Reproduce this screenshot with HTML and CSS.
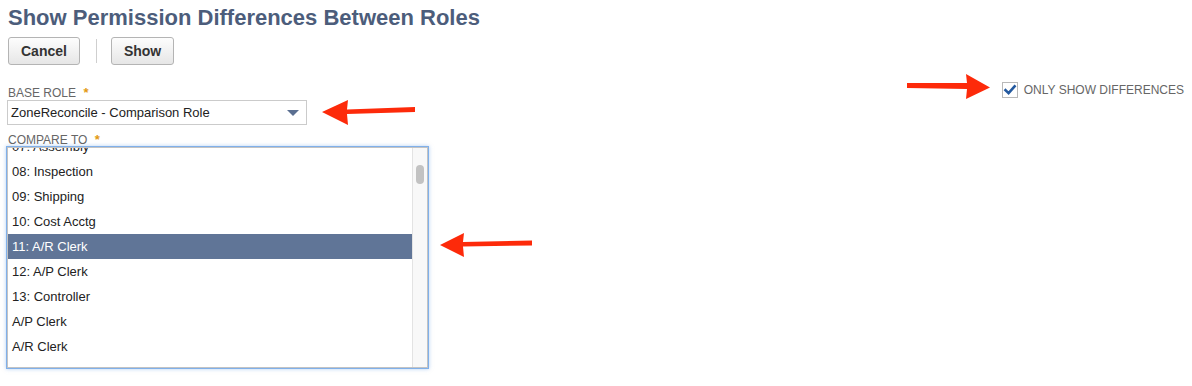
FILE: index.html
```html
<!DOCTYPE html>
<html lang="en">
<head>
  <meta charset="UTF-8">
  <title>Show Permission Differences Between Roles</title>
  <link rel="stylesheet" href="styles.css">
</head>
<body>
  <div class="page">
    <h1 class="title">Show Permission Differences Between Roles</h1>

    <div class="toolbar">
      <button class="btn">Cancel</button>
      <span class="divider"></span>
      <button class="btn">Show</button>
    </div>

    <div class="form">
      <div class="fields">
        <div class="field">
          <div class="field-label">Base Role <span class="req">*</span></div>
          <div class="select">
            <span class="select-value">ZoneReconcile - Comparison Role</span>
            <span class="caret"></span>
          </div>
        </div>

        <div class="field compare">
          <div class="field-label">Compare To <span class="req">*</span></div>
          <div class="listbox">
            <ul class="options">
              <li>07: Assembly</li>
              <li>08: Inspection</li>
              <li>09: Shipping</li>
              <li>10: Cost Acctg</li>
              <li class="selected">11: A/R Clerk</li>
              <li>12: A/P Clerk</li>
              <li>13: Controller</li>
              <li>A/P Clerk</li>
              <li>A/R Clerk</li>
            </ul>
            <div class="scrollbar"><div class="thumb"></div></div>
          </div>
        </div>
      </div>

      <label class="check-row">
        <span class="checkbox">
          <svg width="14" height="14" viewBox="0 0 14 14">
            <polyline points="2.5,7.2 5.6,10.2 11.6,3.4" fill="none" stroke="#23599f" stroke-width="2.6" stroke-linecap="square"/>
          </svg>
        </span>
        Only show differences
      </label>
    </div>

    <!-- red annotation arrows drawn over the screenshot -->
    <svg class="annotations" width="1192" height="386" viewBox="0 0 1192 386">
      <g fill="#fd2a0a">
        <polygon points="322,112 348,100 347,109.5 415,107 415,112 347,114 348,125"/>
        <polygon points="440,245 464,233 463,242 532,240.5 532,245.5 463,246.5 464,257"/>
        <polygon points="990,87.5 966,74 967,83 907,83 907,88 967,89 966,99"/>
      </g>
    </svg>
  </div>
</body>
</html>
```

FILE: styles.css
```css
body {
  margin: 0;
  font-family: "Liberation Sans", Arial, sans-serif;
  color: #222;
  background: #fff;
}

.page {
  position: relative;
  padding: 5px 8px 0 8px;
  height: 381px;
  overflow: hidden;
}

.title {
  margin: 0;
  font-size: 22px;
  line-height: 26px;
  font-weight: bold;
  color: #4c5d7b;
}

.toolbar {
  display: flex;
  align-items: center;
  margin-top: 6px;
  height: 28px;
}

.btn {
  height: 28px;
  padding: 0 12px;
  font-family: "Liberation Sans", Arial, sans-serif;
  font-size: 14px;
  font-weight: bold;
  color: #333;
  background: linear-gradient(#fdfdfd, #e6e6e6);
  border: 1px solid #b4b4b4;
  border-radius: 3px;
}

.divider {
  width: 1px;
  height: 24px;
  margin: 0 14px 0 16px;
  background: #cfcfcf;
}

.form {
  display: flex;
  justify-content: space-between;
  align-items: flex-start;
  margin-top: 16px;
}

.fields {
  padding-top: 5px;
}

.field-label {
  font-size: 12px;
  line-height: 14px;
  color: #666;
  text-transform: uppercase;
}

.req {
  margin-left: 4px;
  color: #e39a12;
  font-weight: bold;
  font-size: 13px;
}

.select {
  display: flex;
  align-items: center;
  justify-content: space-between;
  box-sizing: border-box;
  width: 300px;
  height: 25px;
  margin-left: -1px;
  padding: 0 7px 0 3px;
  border: 1px solid #cbcbcb;
  font-size: 13px;
  color: #222;
}

.caret {
  width: 0;
  height: 0;
  border-left: 6px solid transparent;
  border-right: 6px solid transparent;
  border-top: 6px solid #5b6f91;
}

.compare {
  margin-top: 8px;
}

.listbox {
  display: flex;
  box-sizing: border-box;
  width: 421px;
  height: 221px;
  margin-left: -1px;
  border: 1px solid #c3c3c3;
  box-shadow: 0 0 0 1px #80b0ea, 0 0 4px 1px rgba(120, 170, 230, 0.55);
  overflow: hidden;
}

.options {
  flex: 1;
  margin: -14px 0 0 0;
  padding: 0;
  list-style: none;
  font-size: 13px;
  color: #222;
}

.options li {
  height: 25px;
  line-height: 25px;
  padding-left: 4px;
}

.options li.selected {
  background: #607597;
  color: #fff;
}

.scrollbar {
  width: 14px;
  border-left: 1px solid #e3e3e3;
  background: #f8f8f8;
}

.thumb {
  width: 8px;
  height: 19px;
  margin: 17px 0 0 3px;
  border-radius: 4px;
  background: #c2c2c2;
}

.check-row {
  display: flex;
  align-items: center;
  margin-top: 1px;
  font-size: 12px;
  color: #666;
  text-transform: uppercase;
}

.checkbox {
  display: flex;
  align-items: center;
  justify-content: center;
  box-sizing: border-box;
  width: 16px;
  height: 16px;
  margin-right: 6px;
  border: 1px solid #b9b9b9;
  background: #fff;
}

.annotations {
  position: absolute;
  left: 0;
  top: 0;
  pointer-events: none;
}
```
